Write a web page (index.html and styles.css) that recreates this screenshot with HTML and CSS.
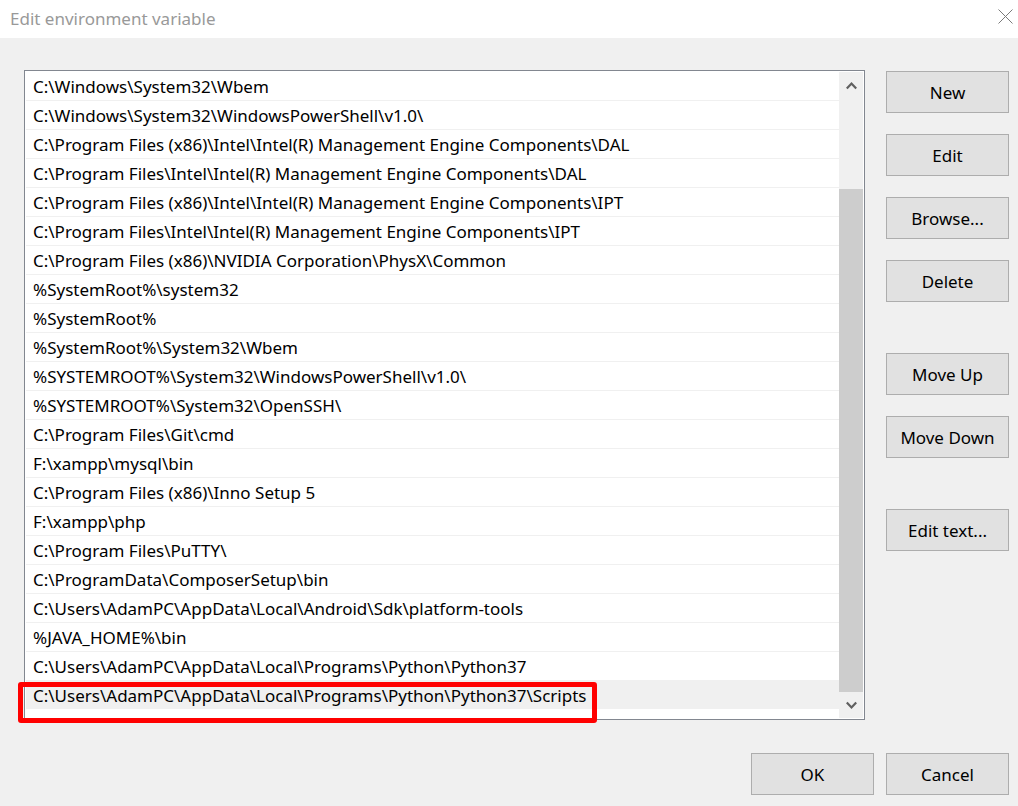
FILE: index.html
```html
<!DOCTYPE html>
<html lang="en">
<head>
    <meta charset="UTF-8">
    <meta name="viewport" content="width=device-width, initial-scale=1.0">
    <title>Edit environment variable</title>
    <link rel="stylesheet" href="styles.css">
</head>
<body>

    <div class="titlebar">
        <span class="title">Edit environment variable</span>
        <svg class="close" width="15" height="15" viewBox="0 0 15 15">
            <path d="M0.5 0.5 L14.5 14.5 M14.5 0.5 L0.5 14.5" stroke="#7a7a7a" stroke-width="1" fill="none"/>
        </svg>
    </div>

    <div class="main">
        <div class="list">
            <div class="rows">
                <div class="row">C:\Windows\System32\Wbem</div>
                <div class="row">C:\Windows\System32\WindowsPowerShell\v1.0\</div>
                <div class="row">C:\Program Files (x86)\Intel\Intel(R) Management Engine Components\DAL</div>
                <div class="row">C:\Program Files\Intel\Intel(R) Management Engine Components\DAL</div>
                <div class="row">C:\Program Files (x86)\Intel\Intel(R) Management Engine Components\IPT</div>
                <div class="row">C:\Program Files\Intel\Intel(R) Management Engine Components\IPT</div>
                <div class="row">C:\Program Files (x86)\NVIDIA Corporation\PhysX\Common</div>
                <div class="row">%SystemRoot%\system32</div>
                <div class="row">%SystemRoot%</div>
                <div class="row">%SystemRoot%\System32\Wbem</div>
                <div class="row">%SYSTEMROOT%\System32\WindowsPowerShell\v1.0\</div>
                <div class="row">%SYSTEMROOT%\System32\OpenSSH\</div>
                <div class="row">C:\Program Files\Git\cmd</div>
                <div class="row">F:\xampp\mysql\bin</div>
                <div class="row">C:\Program Files (x86)\Inno Setup 5</div>
                <div class="row">F:\xampp\php</div>
                <div class="row">C:\Program Files\PuTTY\</div>
                <div class="row">C:\ProgramData\ComposerSetup\bin</div>
                <div class="row">C:\Users\AdamPC\AppData\Local\Android\Sdk\platform-tools</div>
                <div class="row">%JAVA_HOME%\bin</div>
                <div class="row">C:\Users\AdamPC\AppData\Local\Programs\Python\Python37</div>
                <div class="row selected">C:\Users\AdamPC\AppData\Local\Programs\Python\Python37\Scripts<span class="highlight"></span></div>
            </div>
            <div class="scrollbar">
                <div class="arrow">
                    <svg width="11" height="9" viewBox="0 0 11 9"><path d="M0.8 7.5 L5.5 2.5 L10.2 7.5" stroke="#606060" stroke-width="2.2" fill="none"/></svg>
                </div>
                <div class="track"></div>
                <div class="thumb"></div>
                <div class="arrow">
                    <svg width="11" height="9" viewBox="0 0 11 9"><path d="M0.8 1.5 L5.5 6.5 L10.2 1.5" stroke="#606060" stroke-width="2.2" fill="none"/></svg>
                </div>
            </div>
        </div>

        <div class="side">
            <button class="btn">New</button>
            <button class="btn">Edit</button>
            <button class="btn">Browse...</button>
            <button class="btn">Delete</button>
            <button class="btn spaced">Move Up</button>
            <button class="btn">Move Down</button>
            <button class="btn spaced">Edit text...</button>
        </div>
    </div>

    <div class="footer">
        <button class="btn">OK</button>
        <button class="btn">Cancel</button>
    </div>

</body>
</html>
```

FILE: styles.css
```css
*{
    margin: 0;
    padding: 0;
    box-sizing: border-box;
}
body{
    background-color: #f0f0f0;
    font-family: 'Noto Sans', 'Open Sans', Arial, sans-serif;
    font-size: 17px;
    color: #000;
    width: 1018px;
    height: 806px;
    overflow: hidden;
}
.titlebar{
    display: flex;
    justify-content: space-between;
    align-items: center;
    height: 38px;
    padding: 0 5px 0 10px;
    background-color: #fff;
}
.title{
    color: #999;
    font-size: 17px;
    margin-top: -2px;
}
.close{
    margin-top: -6px;
}
.main{
    display: flex;
    gap: 21px;
    padding: 32px 9px 0 24px;
}
.list{
    display: flex;
    width: 841px;
    height: 650px;
    padding: 1px;
    border: 1px solid #828790;
    background-color: #fff;
}
.rows{
    flex: 1;
    display: flex;
    flex-direction: column;
}
.row{
    position: relative;
    height: 29px;
    line-height: 28px;
    padding: 1px 0 0 7px;
    border-bottom: 1px solid #f0f0f0;
    white-space: nowrap;
}
.selected{
    background-color: #f0f0f0;
    border-bottom-color: #fff;
}
.highlight{
    position: absolute;
    left: -8px;
    top: 1px;
    width: 579px;
    height: 41px;
    border: 5px solid #ff0000;
    border-radius: 3px;
}
.scrollbar{
    display: flex;
    flex-direction: column;
    width: 24px;
    background-color: #f0f0f0;
}
.arrow{
    display: flex;
    justify-content: center;
    align-items: center;
    height: 26px;
}
.track{
    flex: 1;
}
.thumb{
    height: 503px;
    background-color: #cdcdcd;
}
.side{
    display: flex;
    flex-direction: column;
    gap: 21px;
    padding-top: 1px;
}
.btn{
    width: 123px;
    height: 42px;
    border: 1px solid #adadad;
    background-color: #e1e1e1;
    font-family: inherit;
    font-size: 17px;
    color: #000;
}
.spaced{
    margin-top: 30px;
}
.footer{
    display: flex;
    justify-content: flex-end;
    gap: 12px;
    padding: 33px 9px 0 0;
}
```
